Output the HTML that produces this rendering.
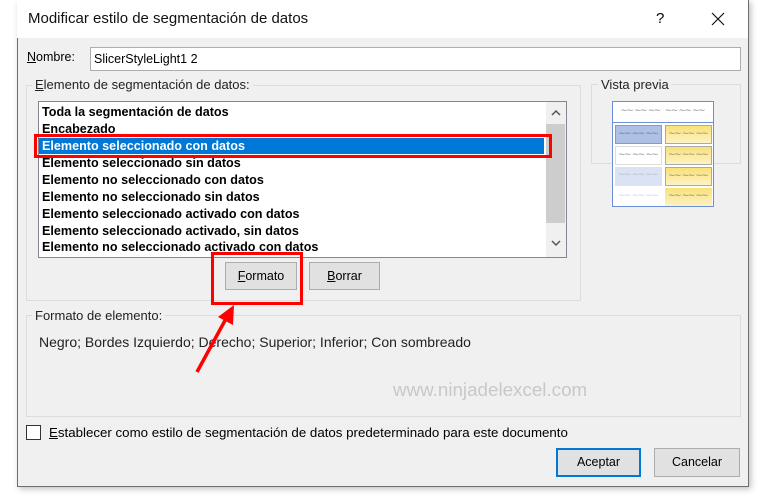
<!DOCTYPE html>
<html><head><meta charset="utf-8"><style>
*{margin:0;padding:0;box-sizing:border-box}
body{width:768px;height:496px;background:#fff;position:relative;overflow:hidden;font-family:"Liberation Sans",sans-serif;font-size:12px;color:#000}
.a{position:absolute}
.dlg{left:17px;top:0;width:732px;height:487px;background:#f0f0f0;border:1px solid #6e6e6e;border-top:none;box-shadow:2px 2px 6px rgba(0,0,0,.25)}
.title{left:17px;top:0;width:731px;height:38px;background:#fff}
.grp{border:1px solid #dcdcdc}
.lbl{background:#f0f0f0;padding:0 3px;color:#222}
.it{left:42px;font-weight:bold;font-size:12.6px;white-space:nowrap}
.btn{background:#e1e1e1;border:1px solid #adadad;text-align:center;line-height:26px;font-size:12.5px}
.red{border:3px solid #f00}
.pv{position:absolute;height:14px;font-size:6px;letter-spacing:0;color:#555;text-align:center;line-height:13px}
</style></head><body>
<div class="a dlg"></div>
<div class="a title"></div>
<div class="a" style="left:28px;top:10px;font-size:15px;color:#111">Modificar estilo de segmentación de datos</div>
<div class="a" style="left:656px;top:10px;font-size:15px">?</div>
<svg class="a" style="left:711px;top:12px" width="14" height="14"><path d="M1 1L13 13M13 1L1 13" stroke="#111" stroke-width="1.2"/></svg>
<div class="a" style="left:27px;top:50px;font-size:12.5px"><u>N</u>ombre:</div>
<div class="a" style="left:90px;top:47px;width:651px;height:24px;background:#fff;border:1px solid #adadad;padding:4px 0 0 3px;font-size:12.5px">SlicerStyleLight1 2</div>
<div class="a grp" style="left:26px;top:85px;width:555px;height:216px"></div>
<div class="a lbl" style="left:32px;top:77px;font-size:13px"><u>E</u>lemento de segmentación de datos:</div>
<div class="a" style="left:38px;top:101px;width:529px;height:157px;background:#fff;border:1px solid #828790"></div>
<div class="a" style="left:546px;top:102px;width:20px;height:155px;background:#f0f0f0"></div>
<div class="a" style="left:546px;top:124px;width:19px;height:99px;background:#cdcdcd"></div>
<svg class="a" style="left:549px;top:106px" width="14" height="14"><path d="M3 9L7 5L11 9" stroke="#555" stroke-width="1.5" fill="none"/></svg>
<svg class="a" style="left:549px;top:236px" width="14" height="14"><path d="M3 5L7 9L11 5" stroke="#555" stroke-width="1.5" fill="none"/></svg>
<div class="a" style="left:39px;top:138px;width:505px;height:16px;background:#0078d7"></div>
<div class="a it" style="top:105px">Toda la segmentación de datos</div>
<div class="a it" style="top:122px">Encabezado</div>
<div class="a it" style="top:139px;color:#fff">Elemento seleccionado con datos</div>
<div class="a it" style="top:156px">Elemento seleccionado sin datos</div>
<div class="a it" style="top:173px">Elemento no seleccionado con datos</div>
<div class="a it" style="top:190px">Elemento no seleccionado sin datos</div>
<div class="a it" style="top:207px">Elemento seleccionado activado con datos</div>
<div class="a it" style="top:224px">Elemento seleccionado activado, sin datos</div>
<div class="a it" style="top:240px;height:17px;overflow:hidden">Elemento no seleccionado activado con datos</div>
<div class="a red" style="left:34px;top:134px;width:518px;height:24px"></div>
<div class="a btn" style="left:225px;top:262px;width:72px;height:28px"><u>F</u>ormato</div>
<div class="a btn" style="left:309px;top:262px;width:71px;height:28px"><u>B</u>orrar</div>
<div class="a red" style="left:211px;top:252px;width:92px;height:53px"></div>
<div class="a grp" style="left:591px;top:84px;width:150px;height:80px"></div>
<div class="a lbl" style="left:598px;top:77px;font-size:13px">Vista previa</div>
<div class="a" style="left:612px;top:101px;width:102px;height:106px;background:#fff;border:1px solid #6d8fd8"></div>
<div class="a" style="left:612px;top:122px;width:102px;height:1px;background:#6d8fd8"></div>
<div class="pv" style="left:613px;top:105px;width:100px">⁓⁓ ⁓⁓ ⁓⁓&nbsp;&nbsp; ⁓⁓ ⁓⁓ ⁓⁓</div>
<div class="pv" style="left:615px;top:125px;width:47px;height:19px;background:#aec0e6;border:1px solid #999;line-height:17px">⁓⁓ ⁓⁓ ⁓⁓</div>
<div class="pv" style="left:615px;top:146px;width:47px;height:19px;background:#fff;border:1px solid #ddd;line-height:17px">⁓⁓ ⁓⁓ ⁓⁓</div>
<div class="pv" style="left:615px;top:167px;width:47px;height:19px;background:#dbe2f3;line-height:17px;color:#aaa">⁓⁓ ⁓⁓ ⁓⁓</div>
<div class="pv" style="left:615px;top:188px;width:47px;height:18px;background:#fff;line-height:17px;color:#bbb">⁓⁓ ⁓⁓ ⁓⁓</div>
<div class="pv" style="left:665px;top:125px;width:47px;height:19px;background:linear-gradient(#f9e07a,#fdf3c5);border:1px solid #aaa;line-height:17px">⁓⁓ ⁓⁓ ⁓⁓</div>
<div class="pv" style="left:665px;top:146px;width:47px;height:19px;background:linear-gradient(#f9e07a,#fdf3c5);border:1px solid #aaa;line-height:17px">⁓⁓ ⁓⁓ ⁓⁓</div>
<div class="pv" style="left:665px;top:167px;width:47px;height:19px;background:linear-gradient(#f9e07a,#fdf3c5);border:1px solid #aaa;line-height:17px">⁓⁓ ⁓⁓ ⁓⁓</div>
<div class="pv" style="left:665px;top:188px;width:47px;height:18px;background:linear-gradient(#f9e07a,#fdf3c5);line-height:17px">⁓⁓ ⁓⁓ ⁓⁓</div>
<div class="a grp" style="left:26px;top:315px;width:715px;height:102px"></div>
<div class="a lbl" style="left:32px;top:308px;font-size:13px">Formato de elemento:</div>
<div class="a" style="left:39px;top:334px;font-size:14px;color:#222">Negro; Bordes Izquierdo; Derecho; Superior; Inferior; Con sombreado</div>
<div class="a" style="left:393px;top:379px;font-size:18.8px;color:#c8c8c8">www.ninjadelexcel.com</div>
<div class="a" style="left:26px;top:425px;width:15px;height:15px;background:#fff;border:1px solid #333"></div>
<div class="a" style="left:49px;top:425px;font-size:13.3px"><u>E</u>stablecer como estilo de segmentación de datos predeterminado para este documento</div>
<div class="a btn" style="left:556px;top:448px;width:85px;height:29px;border:2px solid #0078d7;line-height:25px">Aceptar</div>
<div class="a btn" style="left:654px;top:448px;width:86px;height:29px">Cancelar</div>
<svg class="a" style="left:190px;top:300px" width="60" height="80"><path d="M7 72L38 15" stroke="#f00" stroke-width="3.5"/><path d="M44 5L43 25L28 17Z" fill="#f00"/></svg>
</body></html>
